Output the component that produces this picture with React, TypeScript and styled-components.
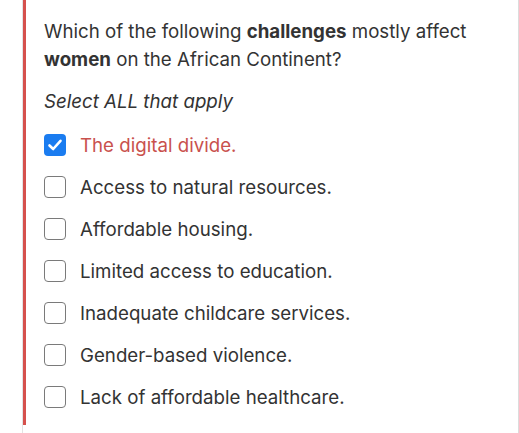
import { createGlobalStyle, styled } from 'styled-components'

const GlobalStyle = createGlobalStyle`
  html, body {
    margin: 0;
    padding: 0;
    background: #ffffff;
  }
  body {
    font-family: Inter, "Open Sans", "Liberation Sans", sans-serif;
    color: #333333;
  }
`

const Frame = styled.div`
  margin-left: 22px;
  width: 497px;
  height: 433px;
  box-sizing: border-box;
  border-left: 1px solid #e3e3e3;
  border-right: 1px solid #dcdcdc;
  overflow: hidden;
`

const Question = styled.div`
  margin-left: -1px;
  height: 425px;
  box-sizing: border-box;
  border-left: 4px solid #d5514d;
  padding: 18px 16px 0 18px;
`

const Prompt = styled.p`
  margin: 0;
  font-size: 18.7px;
  line-height: 28px;
  color: #333333;

  & b {
    font-weight: 700;
  }
`

const Hint = styled.p`
  margin: 14px 0 8px;
  font-size: 18.7px;
  line-height: 28px;
  font-style: italic;
  color: #333333;
`

const Options = styled.ul`
  list-style: none;
  margin: 0;
  padding: 0;
`

const Option = styled.li<{ $checked: boolean }>`
  display: flex;
  align-items: center;
  gap: 14px;
  height: 42px;
  font-size: 18.7px;
  color: ${({ $checked }) => ($checked ? '#c9514d' : '#333333')};
`

const Box = styled.span<{ $checked: boolean }>`
  width: 22px;
  height: 22px;
  box-sizing: border-box;
  border-radius: 4px;
  flex-shrink: 0;
  display: flex;
  align-items: center;
  justify-content: center;
  background: ${({ $checked }) => ($checked ? '#1a7cf0' : '#ffffff')};
  border: ${({ $checked }) => ($checked ? 'none' : '1.5px solid #7a7a7a')};
`

const options = [
  { label: 'The digital divide.', checked: true },
  { label: 'Access to natural resources.', checked: false },
  { label: 'Affordable housing.', checked: false },
  { label: 'Limited access to education.', checked: false },
  { label: 'Inadequate childcare services.', checked: false },
  { label: 'Gender-based violence.', checked: false },
  { label: 'Lack of affordable healthcare.', checked: false },
]

const Check = () => (
  <svg width="16" height="16" viewBox="0 0 16 16" fill="none">
    <path d="M2.5 8.5 L6.2 12 L13.5 3.8" stroke="#ffffff" strokeWidth="2.6" strokeLinecap="round" strokeLinejoin="round" />
  </svg>
)

const App = () => {
  return (
    <>
      <GlobalStyle />
      <Frame>
        <Question>
          <Prompt>
            Which of the following <b>challenges</b> mostly affect <b>women</b> on the African Continent?
          </Prompt>
          <Hint>Select ALL that apply</Hint>
          <Options>
            {options.map((o) => (
              <Option key={o.label} $checked={o.checked}>
                <Box $checked={o.checked}>{o.checked && <Check />}</Box>
                {o.label}
              </Option>
            ))}
          </Options>
        </Question>
      </Frame>
    </>
  )
}

export default App
